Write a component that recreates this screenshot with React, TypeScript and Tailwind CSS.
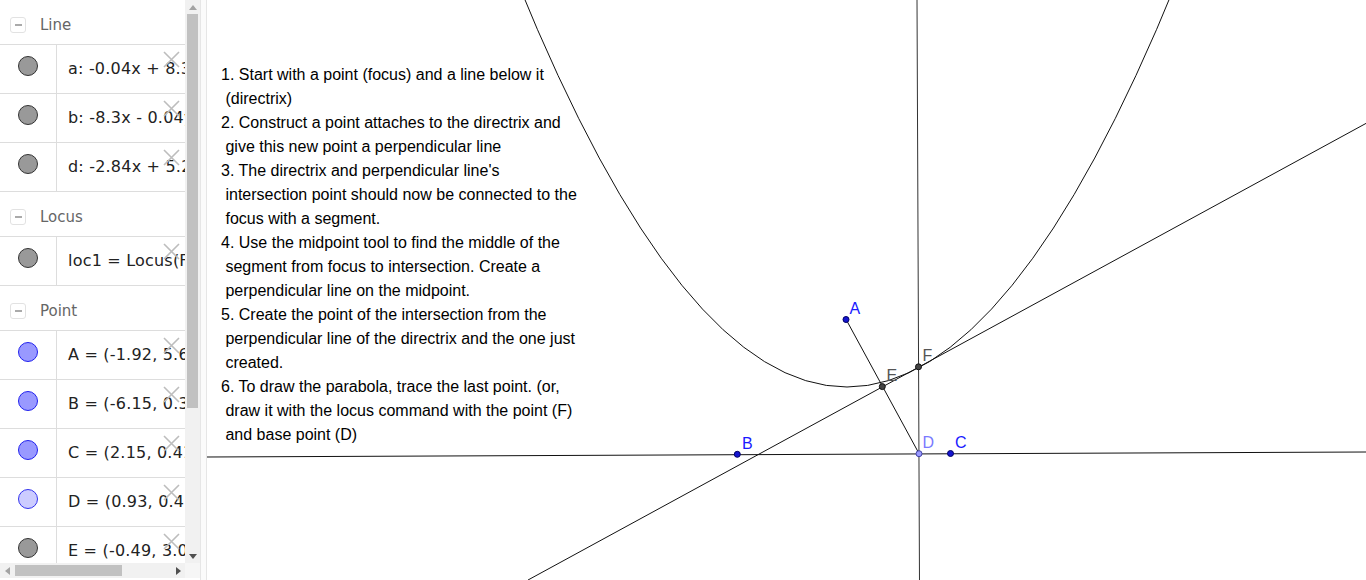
import React from "react";

type Item = { text: string; kind: "gray" | "blue" | "light" };
type Group = { title: string; items: Item[] };

const groups: Group[] = [
  {
    title: "Line",
    items: [
      { text: "a: -0.04x + 8.3y = 3.35", kind: "gray" },
      { text: "b: -8.3x - 0.04y = -7.73", kind: "gray" },
      { text: "d: -2.84x + 5.22y = 17.03", kind: "gray" },
    ],
  },
  {
    title: "Locus",
    items: [{ text: "loc1 = Locus(F, D)", kind: "gray" }],
  },
  {
    title: "Point",
    items: [
      { text: "A = (-1.92, 5.66)", kind: "blue" },
      { text: "B = (-6.15, 0.36)", kind: "blue" },
      { text: "C = (2.15, 0.41)", kind: "blue" },
      { text: "D = (0.93, 0.41)", kind: "light" },
      { text: "E = (-0.49, 3.03)", kind: "gray" },
    ],
  },
];

const lines = [
  "1. Start with a point (focus) and a line below it",
  " (directrix)",
  "2. Construct a point attaches to the directrix and",
  " give this new point a perpendicular line",
  "3. The directrix and perpendicular line's",
  " intersection point should now be connected to the",
  " focus with a segment.",
  "4. Use the midpoint tool to find the middle of the",
  " segment from focus to intersection. Create a",
  " perpendicular line on the midpoint.",
  "5. Create the point of the intersection from the",
  " perpendicular line of the directrix and the one just",
  " created.",
  "6. To draw the parabola, trace the last point. (or,",
  " draw it with the locus command with the point (F)",
  " and base point (D)",
];

function Dot({ kind }: { kind: Item["kind"] }) {
  if (kind === "blue")
    return <div className="w-[20px] h-[20px] rounded-full bg-[#9999ff] border border-[#2222ee]" />;
  if (kind === "light")
    return <div className="w-[20px] h-[20px] rounded-full bg-[#ccccff] border border-[#3333ee]" />;
  return <div className="w-[20px] h-[20px] rounded-full bg-[#999999] border border-[#333333]" />;
}

function CloseX() {
  return (
    <svg className="absolute right-[5px] top-[6px]" width="17" height="17" viewBox="0 0 17 17">
      <path d="M1 1 L16 16 M16 1 L1 16" stroke="#bdbdbd" strokeWidth="1.6" fill="none" />
    </svg>
  );
}

function Header({ title }: { title: string }) {
  return (
    <div className="h-[45px] border-b border-[#dddddd] flex items-center pt-[6px] pl-[10px]">
      <div className="w-[16px] h-[16px] rounded-[3px] border border-[#e2e2e2] flex items-center justify-center">
        <div className="w-[7px] h-[1.5px] bg-[#aaaaaa]" />
      </div>
      <span className="ml-[14px] text-[15px] text-[#666666]" style={{ fontFamily: '"DejaVu Sans", sans-serif' }}>
        {title}
      </span>
    </div>
  );
}

function Row({ item }: { item: Item }) {
  return (
    <div className="relative h-[49px] border-b border-[#dddddd] flex">
      <div className="w-[57px] shrink-0 flex justify-center pt-[11px] border-r border-[#dddddd]">
        <Dot kind={item.kind} />
      </div>
      <div
        className="flex-1 flex items-center pl-[11px] overflow-hidden whitespace-nowrap text-[16px] text-[#222222] tracking-[0.2px]"
        style={{ fontFamily: '"DejaVu Sans", sans-serif' }}
      >
        {item.text}
      </div>
      <CloseX />
    </div>
  );
}

function VScrollbar() {
  return (
    <div className="w-[15px] shrink-0 bg-[#f1f1f1] flex flex-col">
      <div className="h-[14px] flex items-center justify-center">
        <div className="w-0 h-0 border-l-[4px] border-r-[4px] border-b-[5px] border-l-transparent border-r-transparent border-b-[#a3a3a3]" />
      </div>
      <div className="flex-1 px-[2px]">
        <div className="h-[394px] bg-[#c1c1c1]" />
      </div>
      <div className="h-[14px] flex items-center justify-center">
        <div className="w-0 h-0 border-l-[4px] border-r-[4px] border-t-[5px] border-l-transparent border-r-transparent border-t-[#505050]" />
      </div>
    </div>
  );
}

function HScrollbar() {
  return (
    <div className="h-[15px] flex">
      <div className="w-[185px] bg-[#f1f1f1] flex items-center">
        <div className="w-[15px] flex items-center justify-center">
          <div className="w-0 h-0 border-t-[4px] border-b-[4px] border-r-[5px] border-t-transparent border-b-transparent border-r-[#a3a3a3]" />
        </div>
        <div className="w-[107px] h-[11px] bg-[#c1c1c1]" />
        <div className="flex-1" />
        <div className="w-[14px] flex items-center justify-center">
          <div className="w-0 h-0 border-t-[4px] border-b-[4px] border-l-[5px] border-t-transparent border-b-transparent border-l-[#505050]" />
        </div>
      </div>
      <div className="flex-1 bg-[#f6f6f6]" />
    </div>
  );
}

function Graph() {
  const blue = "#1a1aff";
  return (
    <div className="relative flex-1 h-full bg-white overflow-hidden">
      <svg className="absolute inset-0" width="1159" height="580" viewBox="0 0 1159 580">
        <g transform="translate(-207 0)" fill="none" stroke="#111111" strokeWidth="1">
          <path d="M207 457 L1366 452" />
          <path d="M917 -2 L919.5 582" stroke="#333333" />
          <path d="M846 319.3 L919 453.5" />
          <path d="M528 580 L1366 123.4" />
          <path d="M516.7 -20 Q847 794 1177.3 -20" />
        </g>
        <g transform="translate(-207 0)" strokeWidth="1">
          <circle cx="846" cy="319.5" r="3" fill="#1515d0" stroke="#000066" />
          <circle cx="737.3" cy="454.3" r="3" fill="#1515d0" stroke="#000066" />
          <circle cx="950.5" cy="453.5" r="3" fill="#1515d0" stroke="#000066" />
          <circle cx="919" cy="453.7" r="3" fill="#9a9aff" stroke="#4444aa" />
          <circle cx="882.3" cy="386.6" r="3" fill="#444444" stroke="#111111" />
          <circle cx="918.5" cy="366.8" r="3" fill="#444444" stroke="#111111" />
          <g style={{ fontFamily: '"Liberation Sans", Arial, sans-serif' }} fontSize="16">
            <text x="849.5" y="314" fill={blue}>A</text>
            <text x="742" y="448.5" fill={blue}>B</text>
            <text x="955" y="448" fill={blue}>C</text>
            <text x="922.5" y="448" fill="#7a7aff">D</text>
            <text x="886.5" y="380.5" fill="#555555">E</text>
            <text x="922.5" y="361" fill="#555555">F</text>
          </g>
        </g>
      </svg>
      <div
        className="absolute left-[14px] top-[63px] text-[16px] leading-[24px] text-black whitespace-pre"
        style={{ fontFamily: '"Liberation Sans", Arial, sans-serif' }}
      >
        {lines.map((l, i) => (
          <div key={i}>{l}</div>
        ))}
      </div>
    </div>
  );
}

export default function App() {
  return (
    <div className="w-[1366px] h-[580px] flex overflow-hidden bg-white">
      <div className="w-[200px] shrink-0 h-full flex flex-col bg-white">
        <div className="flex-1 min-h-0 flex">
          <div className="w-[185px] shrink-0 overflow-hidden">
            {groups.map((g) => (
              <div key={g.title}>
                <Header title={g.title} />
                {g.items.map((it) => (
                  <Row key={it.text} item={it} />
                ))}
              </div>
            ))}
          </div>
          <VScrollbar />
        </div>
        <HScrollbar />
        <div className="h-[2px]" />
      </div>
      <div className="w-[7px] shrink-0 h-full bg-[#fbfbfb] border-l border-[#d6d6d6] border-r border-[#e6e6e6]" />
      <Graph />
    </div>
  );
}
